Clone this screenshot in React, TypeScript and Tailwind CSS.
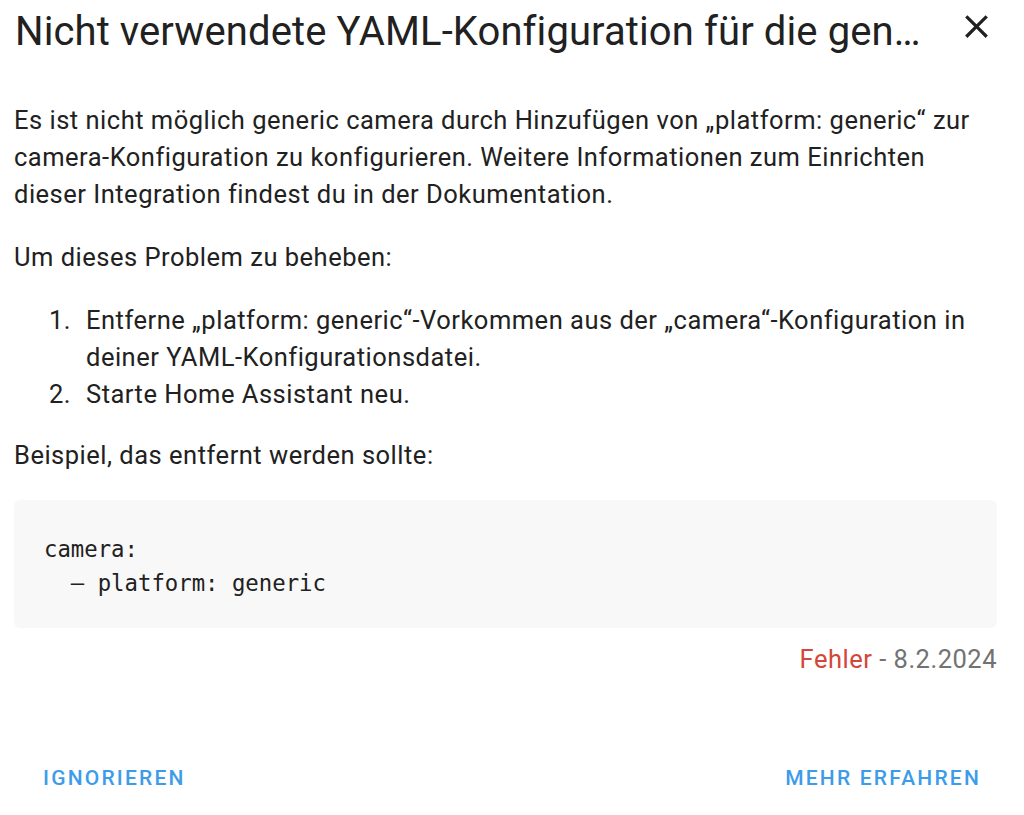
import React from 'react';

const roboto = { fontFamily: 'Roboto, "Noto Sans", sans-serif' };

const CloseIcon: React.FC = () => (
  <svg viewBox="0 0 24 24" className="w-[39px] h-[39px]" fill="#212121">
    <path d="M19,6.41L17.59,5L12,10.59L6.41,5L5,6.41L10.59,12L5,17.59L6.41,19L12,13.41L17.59,19L19,17.59L13.41,12L19,6.41Z" />
  </svg>
);

const steps = [
  'Entferne „platform: generic“-Vorkommen aus der „camera“-Konfiguration in deiner YAML-Konfigurationsdatei.',
  'Starte Home Assistant neu.',
];

export default function App() {
  return (
    <div
      className="w-[1024px] h-[815px] bg-white text-[#212121] flex flex-col overflow-hidden"
      style={roboto}
    >
      {/* Header */}
      <div className="flex items-start h-[62px] pl-[15px] pr-[29px]">
        <h2 className="flex-1 min-w-0 truncate pt-[8px] text-[40px] leading-[48px] tracking-[0.1px] font-normal pr-[30px]">
          Nicht verwendete YAML-Konfiguration für die generische Kamera gefunden
        </h2>
        <button className="mt-[7px] flex items-center justify-center -mr-[1px]">
          <CloseIcon />
        </button>
      </div>

      {/* Content */}
      <div className="pl-[14px] pr-[27px] pt-[40px] text-[25.5px] leading-[37px] tracking-[0.5px]">
        <p>
          Es ist nicht möglich generic camera durch Hinzufügen von „platform: generic“ zur
          camera-Konfiguration zu konfigurieren. Weitere Informationen zum Einrichten
          dieser Integration findest du in der Dokumentation.
        </p>
        <p className="mt-[26px]">Um dieses Problem zu beheben:</p>
        <ol className="mt-[26px]">
          {steps.map((s, i) => (
            <li key={i} className="flex">
              <span className="w-[57px] shrink-0 text-right">{i + 1}.</span>
              <span className="pl-[15px]">{s}</span>
            </li>
          ))}
        </ol>
        <p className="mt-[24px]">Beispiel, das entfernt werden sollte:</p>

        <pre
          className="mt-[26px] bg-[#f8f8f8] rounded-[6px] pl-[30px] pt-[32px] pb-[28px] text-[22.3px] leading-[34px] tracking-normal"
          style={{ fontFamily: '"DejaVu Sans Mono", "Liberation Mono", monospace' }}
        >
{`camera:
  – platform: generic`}
        </pre>

        <div className="mt-[16px] text-right leading-[30px]">
          <span className="text-[#d4463a]">Fehler</span>
          <span className="text-[#727272]"> - 8.2.2024</span>
        </div>
      </div>

      {/* Footer */}
      <div className="mt-auto flex items-center justify-between pl-[43px] pr-[43px] pb-[23px]">
        <button className="text-[21px] leading-[28px] font-medium tracking-[2.2px] text-[#3d9cea]">
          IGNORIEREN
        </button>
        <button className="text-[21px] leading-[28px] font-medium tracking-[2.2px] text-[#3d9cea]">
          MEHR ERFAHREN
        </button>
      </div>
    </div>
  );
}
